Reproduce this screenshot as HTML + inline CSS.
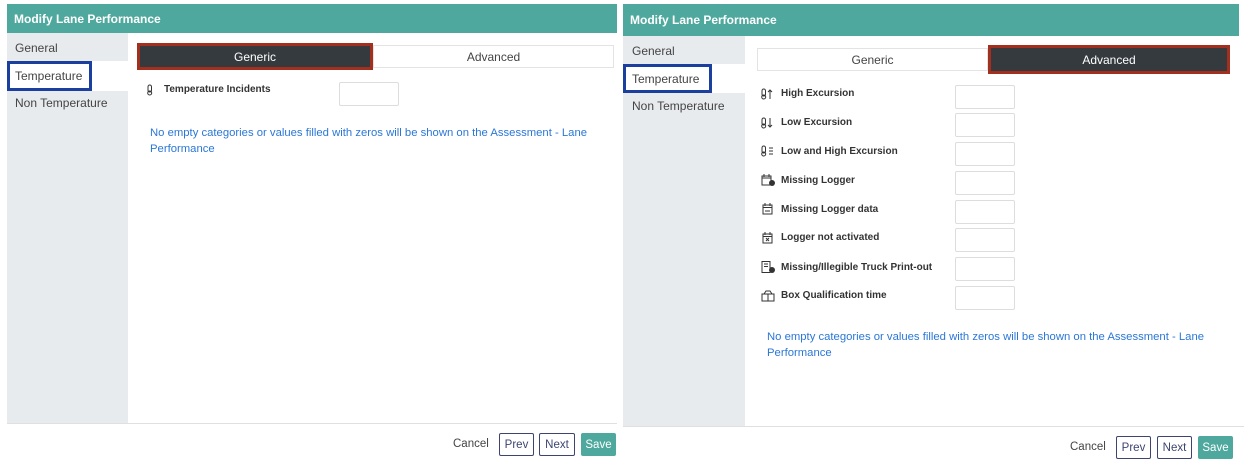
<!DOCTYPE html>
<html><head><style>
*{box-sizing:border-box;margin:0;padding:0}
body{width:1244px;height:470px;background:#fff;position:relative;overflow:hidden;font-family:"Liberation Sans",sans-serif;color:#333}
.a{position:absolute}
.hdr{background:#4ea89d;color:#fff;font-weight:bold;font-size:12px;padding-left:7px;display:flex;align-items:center}
.side{background:#e8ebee}
.nav{font-size:12px;color:#444;position:absolute}
.tab{position:absolute;display:flex;align-items:center;justify-content:center;font-size:12px}
.dark{background:#353a3f;color:#fff;border:3px solid #a3301f}
.light{background:#fff;border:1px solid #e3e3e3;color:#444}
.lbl{position:absolute;font-size:10px;font-weight:bold;color:#333}
.inp{position:absolute;width:60px;height:24px;border:1px solid #ddd;border-radius:2px;background:#fff}
.msg{position:absolute;font-size:11.3px;color:#2b77d6;line-height:16px;white-space:nowrap}
.btn{position:absolute;height:23px;border:1px solid #3d4470;border-radius:2px;font-size:11.5px;color:#3d4470;display:flex;align-items:center;justify-content:center;background:#fff}
.save{background:#4ea89d;color:#fff;border-color:#4ea89d}
.cancel{position:absolute;font-size:11.5px;color:#444}
.ic{position:absolute;width:14px;height:12px}
</style></head><body>
<!-- LEFT -->
<div class="a hdr" style="left:7px;top:4px;width:610px;height:29px">Modify Lane Performance</div>
<div class="a side" style="left:7px;top:33px;width:121px;height:390px"></div>
<div class="a" style="left:7px;top:423px;width:610px;height:1px;background:#e0e0e0"></div>
<div class="a" style="left:7px;top:61px;width:121px;height:30px;background:#fff"></div>
<div class="nav" style="left:15px;top:41px">General</div>
<div class="a" style="left:7px;top:61px;width:85px;height:30px;border:3px solid #1b3f9e"></div>
<div class="nav" style="left:15px;top:69px">Temperature</div>
<div class="nav" style="left:15px;top:96px">Non Temperature</div>
<div class="tab dark" style="left:137px;top:43px;width:236px;height:27px">Generic</div>
<div class="tab light" style="left:373px;top:45px;width:241px;height:23px">Advanced</div>
<svg class="ic" style="left:146px;top:84px" viewBox="0 0 14 12"><rect x="2" y="1" width="3.5" height="7" rx="1.7" fill="none" stroke="#333" stroke-width="1"/><circle cx="3.7" cy="9" r="2" fill="none" stroke="#333" stroke-width="1"/></svg>
<div class="lbl" style="left:164px;top:84px">Temperature Incidents</div>
<div class="inp" style="left:339px;top:82px"></div>
<div class="msg" style="left:150px;top:125px">No empty categories or values filled with zeros will be shown on the Assessment - Lane<br>Performance</div>
<div class="cancel" style="left:453px;top:438px">Cancel</div>
<div class="btn" style="left:499px;top:433px;width:35px">Prev</div>
<div class="btn" style="left:539px;top:433px;width:36px">Next</div>
<div class="btn save" style="left:581px;top:433px;width:35px">Save</div>

<!-- RIGHT -->
<div class="a hdr" style="left:623px;top:4px;width:616px;height:32px">Modify Lane Performance</div>
<div class="a side" style="left:623px;top:36px;width:122px;height:390px"></div>
<div class="a" style="left:623px;top:426px;width:621px;height:1px;background:#e0e0e0"></div>
<div class="a" style="left:623px;top:64px;width:122px;height:29px;background:#fff"></div>
<div class="nav" style="left:632px;top:44px">General</div>
<div class="a" style="left:623px;top:64px;width:89px;height:29px;border:3px solid #1b3f9e"></div>
<div class="nav" style="left:632px;top:72px">Temperature</div>
<div class="nav" style="left:632px;top:99px">Non Temperature</div>
<div class="tab light" style="left:757px;top:48px;width:231px;height:23px">Generic</div>
<div class="tab dark" style="left:988px;top:45px;width:242px;height:29px">Advanced</div>

<svg class="ic" style="left:761px;top:88px" viewBox="0 0 14 12"><rect x="1" y="1" width="3.5" height="7" rx="1.7" fill="none" stroke="#333"/><circle cx="2.7" cy="9" r="2" fill="none" stroke="#333"/><path d="M9 11V2M7 4l2-2 2 2" fill="none" stroke="#333"/></svg>
<div class="lbl" style="left:781px;top:88px">High Excursion</div>
<div class="inp" style="left:955px;top:85px"></div>
<svg class="ic" style="left:761px;top:117px" viewBox="0 0 14 12"><rect x="1" y="1" width="3.5" height="7" rx="1.7" fill="none" stroke="#333"/><circle cx="2.7" cy="9" r="2" fill="none" stroke="#333"/><path d="M9 1v9M7 8l2 2 2-2" fill="none" stroke="#333"/></svg>
<div class="lbl" style="left:781px;top:117px">Low Excursion</div>
<div class="inp" style="left:955px;top:113px"></div>
<svg class="ic" style="left:761px;top:145px" viewBox="0 0 14 12"><rect x="1" y="1" width="3.5" height="7" rx="1.7" fill="none" stroke="#333"/><circle cx="2.7" cy="9" r="2" fill="none" stroke="#333"/><path d="M8 3h4M8 6h4M8 9h4" stroke="#333"/></svg>
<div class="lbl" style="left:781px;top:146px">Low and High Excursion</div>
<div class="inp" style="left:955px;top:142px"></div>
<svg class="ic" style="left:761px;top:174px" viewBox="0 0 14 12"><rect x="1" y="2" width="9" height="9" fill="none" stroke="#333"/><path d="M1 4h9M3 0v3M8 0v3" stroke="#333"/><circle cx="11" cy="9" r="3" fill="#333"/></svg>
<div class="lbl" style="left:781px;top:175px">Missing Logger</div>
<div class="inp" style="left:955px;top:171px"></div>
<svg class="ic" style="left:761px;top:203px" viewBox="0 0 14 12"><rect x="2" y="2" width="9" height="9" fill="none" stroke="#333"/><path d="M2 4.5h9M4 0v3M9 0v3M4 8h5" stroke="#333"/></svg>
<div class="lbl" style="left:781px;top:204px">Missing Logger data</div>
<div class="inp" style="left:955px;top:200px"></div>
<svg class="ic" style="left:761px;top:232px" viewBox="0 0 14 12"><rect x="2" y="2" width="9" height="9" fill="none" stroke="#333"/><path d="M2 4.5h9M4 0v3M9 0v3M5 6l3 3M8 6l-3 3" stroke="#333"/></svg>
<div class="lbl" style="left:781px;top:232px">Logger not activated</div>
<div class="inp" style="left:955px;top:228px"></div>
<svg class="ic" style="left:761px;top:261px" viewBox="0 0 14 12"><rect x="1" y="0.5" width="8" height="11" fill="none" stroke="#333"/><path d="M3 3h4M3 5.5h4" stroke="#333"/><circle cx="11" cy="9" r="3" fill="#333"/></svg>
<div class="lbl" style="left:781px;top:262px">Missing/Illegible Truck Print-out</div>
<div class="inp" style="left:955px;top:257px"></div>
<svg class="ic" style="left:761px;top:290px" viewBox="0 0 14 12"><rect x="1" y="4" width="12" height="7" fill="none" stroke="#333"/><path d="M3 4l2-3h4l2 3M7 4v7" fill="none" stroke="#333"/></svg>
<div class="lbl" style="left:781px;top:290px">Box Qualification time</div>
<div class="inp" style="left:955px;top:286px"></div>

<div class="msg" style="left:767px;top:329px">No empty categories or values filled with zeros will be shown on the Assessment - Lane<br>Performance</div>
<div class="cancel" style="left:1070px;top:441px">Cancel</div>
<div class="btn" style="left:1116px;top:436px;width:35px">Prev</div>
<div class="btn" style="left:1157px;top:436px;width:35px">Next</div>
<div class="btn save" style="left:1198px;top:436px;width:35px">Save</div>
</body></html>
